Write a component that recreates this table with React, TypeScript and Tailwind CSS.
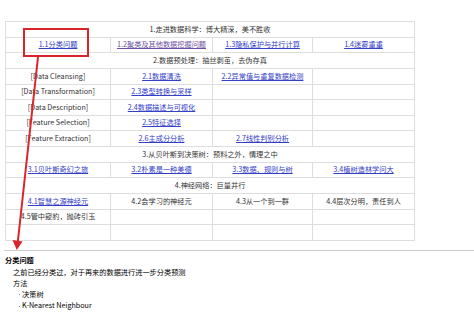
import React from "react";

const L = ({ children, v }: { children: React.ReactNode; v?: boolean }) => (
  <a className={`underline ${v ? "text-[#6d4fa3]" : "text-[#3340c8]"}`}>{children}</a>
);

type Cell = React.ReactNode;

const Row = ({ cells }: { cells: Cell[] }) => (
  <tr className="h-[15.64px]">
    {cells.map((c, i) => (
      <td key={i} className="border border-[#dedede] text-center p-0 whitespace-nowrap overflow-hidden">
        {c}
      </td>
    ))}
  </tr>
);

const Span = ({ children }: { children: React.ReactNode }) => (
  <tr className="h-[15.64px]">
    <td colSpan={4} className="border border-[#dedede] text-center p-0 whitespace-nowrap">
      {children}
    </td>
  </tr>
);

export default function App() {
  return (
    <div
      className="relative w-[474px] h-[315px] bg-white overflow-hidden"
      style={{ fontFamily: '"Noto Sans CJK SC", "Noto Sans", sans-serif' }}
    >
      <div className="pt-[21px] pl-[5px]">
        <table className="table-fixed border-collapse w-[409px] text-[7.2px] leading-none text-[#333]">
          <colgroup>
            <col className="w-[105px]" />
            <col className="w-[102px]" />
            <col className="w-[100px]" />
            <col className="w-[102px]" />
          </colgroup>
          <tbody>
            <Span>1.走进数据科学：博大精深，美不胜收</Span>
            <Row
              cells={[
                <L>1.1分类问题</L>,
                <L v>1.2聚类及其他数据挖掘问题</L>,
                <L>1.3隐私保护与并行计算</L>,
                <L>1.4迷雾重重</L>,
              ]}
            />
            <Span>2.数据预处理：抽丝剥茧，去伪存真</Span>
            <Row cells={["[Data Cleansing]", <L>2.1数据清洗</L>, <L>2.2异常值与重复数据检测</L>, ""]} />
            <Row cells={["[Data Transformation]", <L>2.3类型转换与采样</L>, "", ""]} />
            <Row cells={["[Data Description]", <L>2.4数据描述与可视化</L>, "", ""]} />
            <Row cells={["[Feature Selection]", <L>2.5特征选择</L>, "", ""]} />
            <Row cells={["[Feature Extraction]", <L>2.6主成分分析</L>, <L>2.7线性判别分析</L>, ""]} />
            <Span>3.从贝叶斯到决策树：预料之外，情理之中</Span>
            <Row
              cells={[
                <L>3.1贝叶斯奇幻之旅</L>,
                <L>3.2朴素是一种美德</L>,
                <L>3.3数据、规则与树</L>,
                <L>3.4植树造林学问大</L>,
              ]}
            />
            <Span>4.神经网络：巨量并行</Span>
            <Row
              cells={[<L>4.1智慧之源神经元</L>, "4.2会学习的神经元", "4.3从一个到一群", "4.4层次分明，责任到人"]}
            />
            <Row cells={["4.5管中窥豹，抛砖引玉", "", "", ""]} />
            <Row cells={["", "", "", ""]} />
          </tbody>
        </table>
      </div>

      <div className="mt-[9px] ml-[4px] h-[1.5px] bg-[#cfcfcf]" />

      <div className="mt-[4px] pl-[5px] text-[7.2px] leading-[11.3px] text-black">
        <div className="font-bold">分类问题</div>
        <div className="pl-[8px]">之前已经分类过，对于再来的数据进行进一步分类预测</div>
        <div className="pl-[8px]">方法</div>
        <div className="pl-[14px] flex items-center">
          <span className="w-[1px] h-[1px] bg-[#888] mr-[2px]" />
          <span>决策树</span>
        </div>
        <div className="pl-[14px] flex items-center">
          <span className="w-[1px] h-[1px] bg-[#888] mr-[2px]" />
          <span>K-Nearest Neighbour</span>
        </div>
      </div>

      {/* annotation overlay */}
      <div className="absolute left-[23px] top-[28px] w-[66px] h-[29px] border-2 border-[#d8262c]" />
      <svg className="absolute left-0 top-0" width="474" height="315" viewBox="0 0 474 315">
        <line x1="38" y1="57" x2="17.8" y2="242" stroke="#d8262c" strokeWidth="2" />
        <polygon points="12.5,240 22.5,241.5 16.8,250" fill="#d8262c" />
      </svg>
    </div>
  );
}
